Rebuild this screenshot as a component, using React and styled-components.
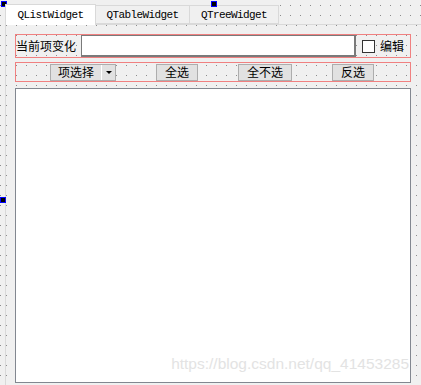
import React from 'react';
import styled, { createGlobalStyle } from 'styled-components';

const GlobalStyle = createGlobalStyle`
    html, body {
        margin: 0;
        padding: 0;
        background: #f0f0f0;
    }
`;

const dots = (x, y) => `
    background-color: #f0f0f0;
    background-image: radial-gradient(circle at 0.5px 0.5px, #8c8c8c 0.6px, transparent 0.9px);
    background-size: 10px 10px;
    background-position: ${x}px ${y}px;
`;

const Form = styled.div`
    position: relative;
    width: 421px;
    height: 385px;
    overflow: hidden;
    box-sizing: border-box;
    padding: 4px 0 0 5px;
    ${dots(0, 5)}
    font-family: "Noto Sans CJK SC", "Liberation Sans", sans-serif;
    font-size: 12px;
    color: #000;
`;

const Handle = styled.div`
    position: absolute;
    left: ${p => p.$x}px;
    top: ${p => p.$y}px;
    width: 4px;
    height: 4px;
    background: #000;
    border: 1px solid #0000ff;
`;

const TabBar = styled.div`
    display: flex;
    align-items: flex-end;
    height: 20px;
`;

const Tab = styled.div`
    box-sizing: border-box;
    width: ${p => p.$w}px;
    height: ${p => (p.$active ? 21 : 19)}px;
    margin-bottom: ${p => (p.$active ? -1 : 0)}px;
    display: flex;
    align-items: center;
    justify-content: center;
    background: ${p => (p.$active ? '#ffffff' : '#f0f0f0')};
    border: 1px solid #d9d9d9;
    border-bottom: ${p => (p.$active ? 'none' : '1px solid #d9d9d9')};
    border-left: ${p => (p.$first ? '1px solid #d9d9d9' : 'none')};
    font-family: "Liberation Mono", "DejaVu Sans Mono", monospace;
    font-size: 11px;
    letter-spacing: -0.6px;
    padding-bottom: ${p => (p.$active ? 1 : 0)}px;
    position: relative;
    z-index: ${p => (p.$active ? 1 : 0)};
`;

const Pane = styled.div`
    box-sizing: border-box;
    width: 420px;
    height: 370px;
    border-top: 1px solid #d9d9d9;
    border-left: 1px solid #d9d9d9;
    padding: 9px 0 0 9px;
    ${dots(0, 0)}
    display: flex;
    flex-direction: column;
`;

const Frame = styled.div`
    box-sizing: border-box;
    width: 396px;
    height: ${p => p.$h}px;
    border: 1px solid #f08080;
    display: flex;
    align-items: center;
    margin-bottom: ${p => p.$mb}px;
    padding-left: ${p => p.$pl || 0}px;
`;

const Label = styled.span`
    white-space: nowrap;
    line-height: 14px;
`;

const LineEdit = styled.div`
    box-sizing: border-box;
    width: 275px;
    height: 22px;
    margin-left: 5px;
    background: #fff;
    border: 1px solid #7a7a7a;
    border-right-width: 2px;
    border-bottom-width: 2px;
`;

const CheckBox = styled.span`
    box-sizing: border-box;
    width: 13px;
    height: 13px;
    margin: 0 5px 0 6px;
    background: #fff;
    border: 1px solid #333;
`;

const Buttons = styled.div`
    display: flex;
    align-items: center;
    gap: 40px;
`;

const Button = styled.div`
    box-sizing: border-box;
    width: ${p => p.$w}px;
    height: 17px;
    background: #e1e1e1;
    border: 1px solid #adadad;
    display: flex;
    align-items: center;
    justify-content: center;
    line-height: 14px;
`;

const Combo = styled(Button)`
    justify-content: flex-start;
    padding-left: 7px;
    position: relative;
`;

const ComboArrow = styled.span`
    position: absolute;
    right: 0;
    top: 0;
    bottom: 0;
    width: 13px;
    border-left: 1px solid #fff;
    display: flex;
    align-items: center;
    justify-content: center;

    &::after {
        content: '';
        border-left: 3px solid transparent;
        border-right: 3px solid transparent;
        border-top: 3px solid #000;
    }
`;

const List = styled.div`
    position: relative;
    box-sizing: border-box;
    width: 396px;
    height: 295px;
    background: #fff;
    border: 1px solid #828790;
`;

const Watermark = styled.span`
    position: absolute;
    right: 1px;
    bottom: 9px;
    font-family: "Liberation Sans", Arial, sans-serif;
    font-size: 15.5px;
    color: #e3e3e3;
    white-space: nowrap;
`;

export default function App() {
    return (
        <>
            <GlobalStyle />
            <Form>
                <TabBar>
                    <Tab $w={91} $active $first>QListWidget</Tab>
                    <Tab $w={94}>QTableWidget</Tab>
                    <Tab $w={89}>QTreeWidget</Tab>
                </TabBar>
                <Pane>
                    <Frame $h={24} $mb={4} $pl={0}>
                        <Label>当前项变化</Label>
                        <LineEdit />
                        <CheckBox />
                        <Label>编辑</Label>
                    </Frame>
                    <Frame $h={20} $mb={6} $pl={34}>
                        <Buttons>
                            <Combo $w={66}>
                                项选择
                                <ComboArrow />
                            </Combo>
                            <Button $w={42}>全选</Button>
                            <Button $w={54}>全不选</Button>
                            <Button $w={42}>反选</Button>
                        </Buttons>
                    </Frame>
                    <List>
                        <Watermark>https://blog.csdn.net/qq_41453285</Watermark>
                    </List>
                </Pane>
                <Handle $x={1} $y={1} />
                <Handle $x={211} $y={1} />
                <Handle $x={0} $y={197} />
            </Form>
        </>
    );
}
